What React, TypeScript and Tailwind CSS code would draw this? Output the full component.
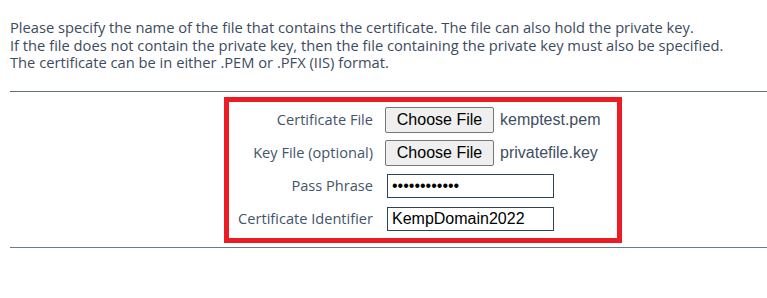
const labelCls = "w-[144px] shrink-0 text-right text-[14.6px] text-[#44546a]";
const fieldFont = { fontFamily: '"Liberation Sans", Arial, sans-serif' };

function FileRow({ label, file }: { label: string; file: string }) {
  return (
    <div className="flex h-[33px] items-center">
      <div className={labelCls}>{label}</div>
      <div className="ml-[12px] flex items-center" style={fieldFont}>
        <span className="flex h-[26px] w-[109px] items-center justify-center rounded-[2px] border border-[#767676] bg-[#efefef] text-[16px] text-black">
          Choose File
        </span>
        <span className="ml-[6px] text-[16px] text-[#3f4f63]">{file}</span>
      </div>
    </div>
  );
}

function TextRow({ label, value }: { label: string; value: string }) {
  return (
    <div className="flex h-[33px] items-center">
      <div className={labelCls}>{label}</div>
      <div
        className="ml-[14px] flex h-[24px] w-[167px] items-center border border-[#2f4256] px-[4px] text-[16px] text-black"
        style={fieldFont}
      >
        {value}
      </div>
    </div>
  );
}

export default function App() {
  return (
    <div
      className="h-[298px] w-[767px] bg-white pl-[10px] pt-[19px]"
      style={{ fontFamily: '"Open Sans", "Noto Sans", sans-serif' }}
    >
      <p className="flex flex-col text-[14.7px] leading-[17.5px] text-[#3d4b5e]">
        <span className="block h-[17.5px]">
          Please specify the name of the file that contains the certificate. The file can also hold the private key.
        </span>
        <span className="block h-[17.5px]">
          If the file does not contain the private key, then the file containing the private key must also be specified.
        </span>
        <span className="block h-[17.5px]">The certificate can be in either .PEM or .PFX (IIS) format.</span>
      </p>
      <div className="mt-[19px] h-px bg-[#62737f]" />
      <div className="ml-[214px] mt-[5px] h-[146px] w-[398px] border-[5px] border-[#ed1c24] pt-[2px]">
        <FileRow label="Certificate File" file="kemptest.pem" />
        <FileRow label="Key File (optional)" file="privatefile.key" />
        <TextRow label="Pass Phrase" value="••••••••••••" />
        <TextRow label="Certificate Identifier" value="KempDomain2022" />
      </div>
      <div className="mt-[4px] h-px bg-[#5f7d93]" />
    </div>
  );
}
